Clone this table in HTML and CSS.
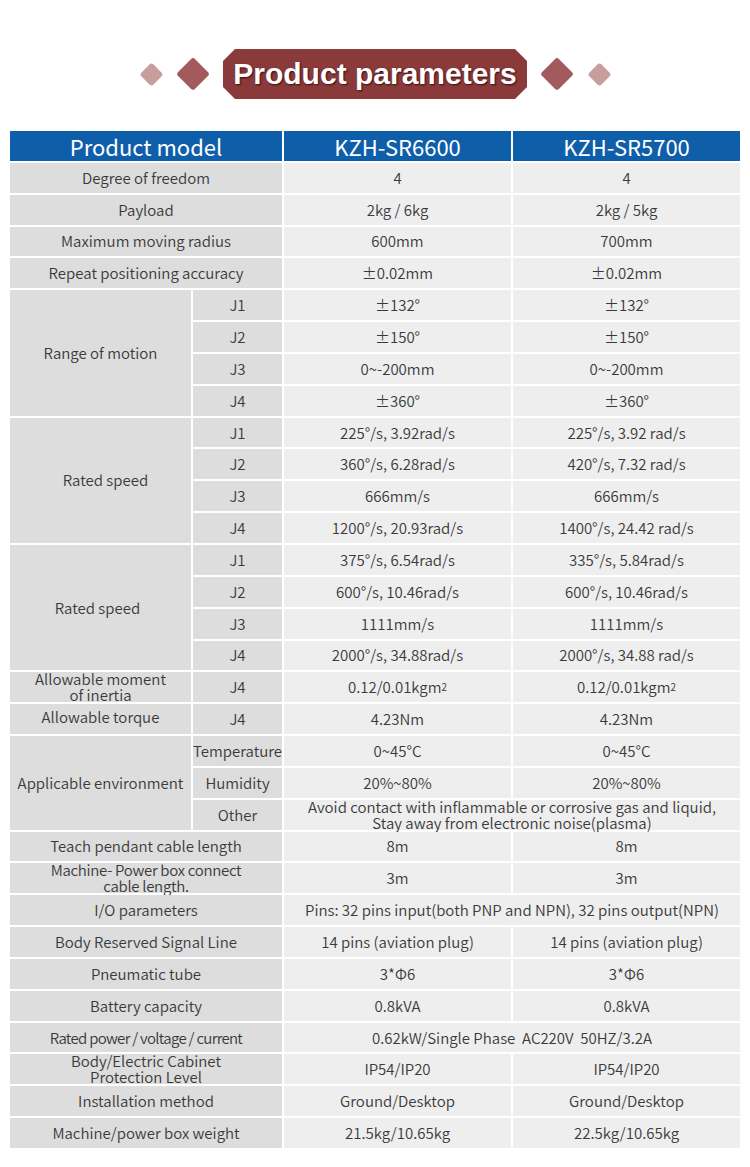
FILE: index.html
```html
<!DOCTYPE html>
<html>
<head>
<meta charset="utf-8">
<link rel="stylesheet" href="styles.css">
</head>
<body>
<div class="title-row">
  <span class="dia-wrap small"><span class="dia"></span></span>
  <span class="dia-wrap big"><span class="dia"></span></span>
  <div class="banner">Product parameters</div>
  <span class="dia-wrap big"><span class="dia"></span></span>
  <span class="dia-wrap small"><span class="dia"></span></span>
</div>

<div class="t">
  <div class="c h s2">Product model</div>
  <div class="c h">KZH-SR6600</div>
  <div class="c h">KZH-SR5700</div>

  <div class="c l s2">Degree of freedom</div><div class="c v">4</div><div class="c v">4</div>
  <div class="c l s2">Payload</div><div class="c v">2kg / 6kg</div><div class="c v">2kg / 5kg</div>
  <div class="c l s2">Maximum moving radius</div><div class="c v">600mm</div><div class="c v">700mm</div>
  <div class="c l s2">Repeat positioning accuracy</div><div class="c v">±0.02mm</div><div class="c v">±0.02mm</div>

  <div class="c l r4">Range of motion</div>
  <div class="c l">J1</div><div class="c v">±132°</div><div class="c v">±132°</div>
  <div class="c l">J2</div><div class="c v">±150°</div><div class="c v">±150°</div>
  <div class="c l">J3</div><div class="c v">0~-200mm</div><div class="c v">0~-200mm</div>
  <div class="c l">J4</div><div class="c v">±360°</div><div class="c v">±360°</div>

  <div class="c l r4 pl">Rated speed</div>
  <div class="c l">J1</div><div class="c v">225°/s, 3.92rad/s</div><div class="c v">225°/s, 3.92 rad/s</div>
  <div class="c l">J2</div><div class="c v">360°/s, 6.28rad/s</div><div class="c v">420°/s, 7.32 rad/s</div>
  <div class="c l">J3</div><div class="c v">666mm/s</div><div class="c v">666mm/s</div>
  <div class="c l">J4</div><div class="c v">1200°/s, 20.93rad/s</div><div class="c v">1400°/s, 24.42 rad/s</div>

  <div class="c l r4 pr">Rated speed</div>
  <div class="c l">J1</div><div class="c v">375°/s, 6.54rad/s</div><div class="c v">335°/s, 5.84rad/s</div>
  <div class="c l">J2</div><div class="c v">600°/s, 10.46rad/s</div><div class="c v">600°/s, 10.46rad/s</div>
  <div class="c l">J3</div><div class="c v">1111mm/s</div><div class="c v">1111mm/s</div>
  <div class="c l">J4</div><div class="c v">2000°/s, 34.88rad/s</div><div class="c v">2000°/s, 34.88 rad/s</div>

  <div class="c l two">Allowable moment<br>of inertia</div><div class="c l">J4</div><div class="c v">0.12/0.01kgm<sup>2</sup></div><div class="c v">0.12/0.01kgm<sup>2</sup></div>
  <div class="c l up">Allowable torque</div><div class="c l">J4</div><div class="c v">4.23Nm</div><div class="c v">4.23Nm</div>

  <div class="c l r3">Applicable environment</div>
  <div class="c l">Temperature</div><div class="c v">0~45°C</div><div class="c v">0~45°C</div>
  <div class="c l">Humidity</div><div class="c v">20%~80%</div><div class="c v">20%~80%</div>
  <div class="c l">Other</div><div class="c v s2 two">Avoid contact with inflammable or corrosive gas and liquid,<br>Stay away from electronic noise(plasma)</div>

  <div class="c l s2">Teach pendant cable length</div><div class="c v">8m</div><div class="c v">8m</div>
  <div class="c l s2 two tight">Machine- Power box connect<br>cable length.</div><div class="c v">3m</div><div class="c v">3m</div>
  <div class="c l s2">I/O parameters</div><div class="c v s2">Pins: 32 pins input(both PNP and NPN), 32 pins output(NPN)</div>
  <div class="c l s2">Body Reserved Signal Line</div><div class="c v">14 pins (aviation plug)</div><div class="c v">14 pins (aviation plug)</div>
  <div class="c l s2">Pneumatic tube</div><div class="c v">3*Φ6</div><div class="c v">3*Φ6</div>
  <div class="c l s2">Battery capacity</div><div class="c v">0.8kVA</div><div class="c v">0.8kVA</div>
  <div class="c l s2 cond">Rated power / voltage / current</div><div class="c v s2">0.62kW/Single Phase&nbsp; AC220V&nbsp; 50HZ/3.2A</div>
  <div class="c l s2 two">Body/Electric Cabinet<br>Protection Level</div><div class="c v">IP54/IP20</div><div class="c v">IP54/IP20</div>
  <div class="c l s2">Installation method</div><div class="c v">Ground/Desktop</div><div class="c v">Ground/Desktop</div>
  <div class="c l s2">Machine/power box weight</div><div class="c v">21.5kg/10.65kg</div><div class="c v">22.5kg/10.65kg</div>
</div>
</body>
</html>
```

FILE: styles.css
```css
html, body {
  margin: 0;
  padding: 0;
  background: #ffffff;
}

body {
  width: 750px;
  font-family: "Noto Sans CJK SC", "Noto Sans", sans-serif;
  color: #3a3a3a;
}

.title-row {
  display: flex;
  justify-content: center;
  align-items: center;
  gap: 13px;
  padding-top: 49px;
  height: 50px;
}

.dia-wrap {
  display: flex;
  align-items: center;
  justify-content: center;
}

.dia-wrap.small { width: 24px; height: 24px; }
.dia-wrap.big { width: 34px; height: 34px; }

.dia {
  display: block;
  transform: rotate(45deg);
  border-radius: 3px;
}

.small .dia {
  width: 17px;
  height: 17px;
  background: #c79d9d;
}

.big .dia {
  width: 24px;
  height: 24px;
  background: #a35a5c;
}

.banner {
  width: 304px;
  height: 50px;
  background: #8a3a3b;
  clip-path: polygon(12px 0, 292px 0, 304px 12px, 304px 38px, 292px 50px, 12px 50px, 0 38px, 0 12px);
  color: #ffffff;
  font-family: "Liberation Sans", Arial, sans-serif;
  font-weight: bold;
  font-size: 30px;
  display: flex;
  align-items: center;
  justify-content: center;
  text-shadow: 1px 1px 2px rgba(40, 0, 0, 0.8);
}

.t {
  display: grid;
  grid-template-columns: 181px 89px 227px 227px;
  grid-auto-rows: 29.85px;
  gap: 2px;
  width: 730px;
  margin: 32px 0 0 10px;
}

.c {
  display: flex;
  align-items: center;
  justify-content: center;
  text-align: center;
  font-size: 15px;
  font-weight: 350;
  line-height: 18px;
  white-space: nowrap;
}

.h {
  background: #0f5ea9;
  color: #ffffff;
  font-size: 22px;
  font-weight: 400;
}

.l { background: #dddddd; }
.v { background: #eeeeee; }

.s2 { grid-column: span 2; }
.r4 { grid-row: span 4; }
.r3 { grid-row: span 3; }

.two { line-height: 16px; }
.tight { letter-spacing: -0.3px; }
.cond { letter-spacing: -0.7px; }
.up { padding-bottom: 4px; }
.pl { padding-left: 10px; }
.pr { padding-right: 6px; }

sup {
  font-size: 10px;
  line-height: 0;
  vertical-align: 6px;
}
```
